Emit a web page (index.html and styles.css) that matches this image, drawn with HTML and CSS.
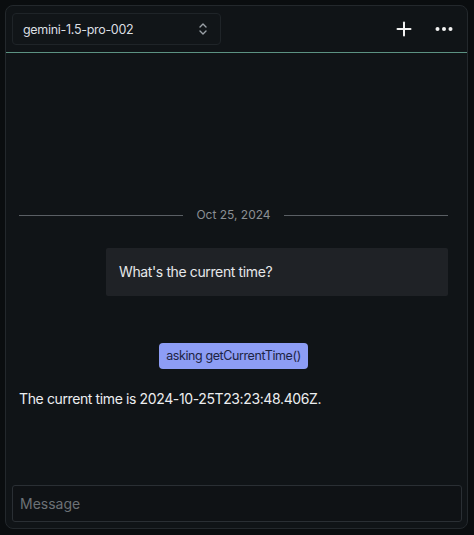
FILE: index.html
```html
<!DOCTYPE html>
<html>
<head>
<meta charset="utf-8">
<link rel="stylesheet" href="styles.css">
</head>
<body>
<div class="panel">
  <header class="header">
    <div class="select">
      <span>gemini-1.5-pro-002</span>
      <svg class="chev" width="10" height="14" viewBox="0 0 10 14" fill="none" stroke="#9aa0a6" stroke-width="1.4" stroke-linecap="round" stroke-linejoin="round"><path d="M2 5 L5 2 L8 5"/><path d="M2 9 L5 12 L8 9"/></svg>
    </div>
    <div class="actions">
      <svg class="plus" width="16" height="16" viewBox="0 0 16 16" fill="none" stroke="#f2f2f2" stroke-width="2" stroke-linecap="round"><path d="M8 1.5 V14.5"/><path d="M1.5 8 H14.5"/></svg>
      <svg class="dots" width="18" height="6" viewBox="0 0 18 6" fill="#f2f2f2"><circle cx="2.5" cy="3" r="2"/><circle cx="9" cy="3" r="2"/><circle cx="15.5" cy="3" r="2"/></svg>
    </div>
  </header>
  <main class="messages">
    <div class="divider"><span class="line"></span><span class="date">Oct 25, 2024</span><span class="line"></span></div>
    <div class="user-row"><div class="bubble">What's the current time?</div></div>
    <div class="tool-row"><span class="badge">asking getCurrentTime()</span></div>
    <p class="reply">The current time is 2024-10-25T23:23:48.406Z.</p>
  </main>
  <footer class="composer">
    <div class="input">Message</div>
  </footer>
</div>
</body>
</html>
```
FILE: styles.css
```css
* { box-sizing: border-box; }
html, body { margin: 0; padding: 0; }
body {
  background: #0a0d0f;
  font-family: Inter, "Noto Sans", "Liberation Sans", sans-serif;
  color: #e8eaec;
  width: 474px;
  height: 535px;
  overflow: hidden;
}
.panel {
  margin: 5px 6px 0 5px;
  height: 524px;
  border: 1px solid #23282c;
  border-radius: 8px;
  background: #101417;
  display: flex;
  flex-direction: column;
  overflow: hidden;
}
.header {
  display: flex;
  align-items: center;
  justify-content: space-between;
  padding: 7px 14px 7px 6px;
  border-bottom: 1.5px solid #5c9282;
}
.select {
  width: 209px;
  height: 32px;
  border: 1px solid #1f2428;
  border-radius: 4px;
  background: #111518;
  display: flex;
  align-items: center;
  justify-content: space-between;
  padding: 0 12px 0 10px;
  font-size: 12.5px;
  letter-spacing: -0.3px;
  color: #dcdfe2;
}
.chev { display: block; }
.actions {
  display: flex;
  align-items: center;
  gap: 23px;
}
.plus, .dots { display: block; }
.messages {
  flex: 1;
  display: flex;
  flex-direction: column;
  justify-content: flex-end;
  padding: 0 19px 77px 13px;
}
.divider {
  display: flex;
  align-items: center;
  gap: 13px;
  margin-bottom: 25px;
}
.line {
  flex: 1;
  height: 1px;
  background: #5a5f64;
}
.date {
  font-size: 12px;
  color: #8a8f94;
  line-height: 16px;
}
.user-row {
  display: flex;
  justify-content: flex-end;
}
.bubble {
  width: 342px;
  background: #1f2226;
  border-radius: 2px;
  padding: 15px 13px;
  font-size: 14px;
  letter-spacing: -0.38px;
  line-height: 18px;
  color: #e6e8ea;
}
.tool-row {
  display: flex;
  justify-content: center;
  margin-top: 47px;
}
.badge {
  background: #8d9df5;
  color: #1d2444;
  font-size: 12.5px;
  letter-spacing: -0.4px;
  line-height: 16px;
  padding: 5px 7px;
  border-radius: 4px;
}
.reply {
  margin: 21px 0 0 0;
  font-size: 14px;
  letter-spacing: -0.38px;
  line-height: 18px;
  color: #eceef0;
}
.composer {
  padding: 0 5px 6px 6px;
}
.input {
  height: 37px;
  border: 1px solid #2a2f34;
  border-radius: 3px;
  background: #0f1215;
  display: flex;
  align-items: center;
  padding: 0 7px;
  font-size: 14px;
  color: #6c7176;
}
```
